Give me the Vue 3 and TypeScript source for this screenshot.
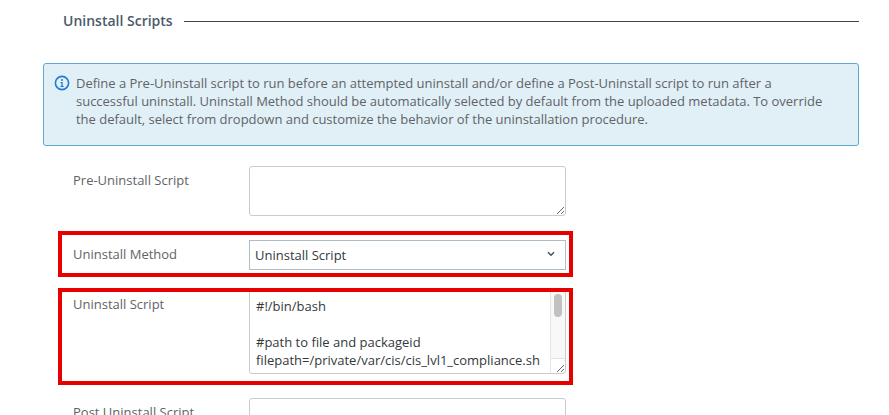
<script setup lang="ts">
const scriptText = `#!/bin/bash

#path to file and packageid
filepath=/private/var/cis/cis_lvl1_compliance.sh
`
</script>

<template>
  <main class="page">
    <header class="section-head">
      <h2>Uninstall Scripts</h2>
      <span class="rule"></span>
    </header>

    <div class="alert">
      <svg class="info" viewBox="0 0 16 16" width="16" height="16" aria-hidden="true">
        <circle cx="8" cy="8" r="6.6" fill="none" stroke="#1f7ad6" stroke-width="1.6" />
        <circle cx="8" cy="4.9" r="1" fill="#1f7ad6" />
        <path d="M6.5 7h2.2v4.1h1v1H6.4v-1h1V8h-.9z" fill="#1f7ad6" />
      </svg>
      <p>Define a Pre-Uninstall script to run before an attempted uninstall and/or define a Post-Uninstall script to run after a successful uninstall. Uninstall Method should be automatically selected by default from the uploaded metadata. To override the default, select from dropdown and customize the behavior of the uninstallation procedure.</p>
    </div>

    <form class="form">
      <div class="row row-pre">
        <label>Pre-Uninstall Script</label>
        <textarea class="area area-pre"></textarea>
      </div>
      <div class="row row-method">
        <label>Uninstall Method</label>
        <div class="select">
          <span>Uninstall Script</span>
          <svg viewBox="0 0 8 6" width="8" height="6" aria-hidden="true">
            <path d="M1 1.2 4 4.2 7 1.2" fill="none" stroke="#4a5560" stroke-width="1.6" />
          </svg>
        </div>
      </div>
      <div class="row row-script">
        <label>Uninstall Script</label>
        <div class="script-wrap">
          <textarea class="area area-script" :value="scriptText" spellcheck="false"></textarea>
          <span class="track"><span class="thumb"></span></span>
          <span class="corner"></span>
        </div>
      </div>
      <div class="row row-post">
        <label>Post Uninstall Script</label>
        <textarea class="area area-post"></textarea>
      </div>
      <span class="mark mark-method"></span>
      <span class="mark mark-script"></span>
    </form>
  </main>
</template>

<style>
html, body { margin: 0; background: #fff; overflow: hidden; }
</style>

<style scoped>
.page {
  width: 889px;
  height: 415px;
  overflow: hidden;
  box-sizing: border-box;
  padding: 12px 30px 0 43px;
  font-family: "Open Sans", sans-serif;
  font-size: 13px;
  line-height: 18px;
  color: #5f6368;
}
.section-head {
  display: flex;
  align-items: center;
  gap: 11px;
  height: 18px;
  padding-left: 20px;
}
.section-head h2 {
  margin: 0;
  font-size: 14px;
  font-weight: 600;
  line-height: 18px;
  color: #4c5a6b;
}
.rule {
  flex: 1;
  height: 1px;
  margin-top: 1px;
  background: #3f4650;
}
.alert {
  display: flex;
  gap: 6px;
  box-sizing: border-box;
  height: 83px;
  margin-top: 33px;
  padding: 10px 28px 0 10px;
  background: #e1f0f6;
  border: 1px solid #5aaad6;
  border-radius: 3px;
}
.info { flex: none; margin-top: 1px; }
.alert p { margin: 0; letter-spacing: -0.015px; }
.form {
  position: relative;
  margin-top: 20px;
  width: 523px;
}
.row {
  display: grid;
  grid-template-columns: 176px 317px;
  padding-left: 30px;
}
.row label { display: block; margin-top: 5px; }
.row-method { margin-top: 24px; }
.row-script { margin-top: 20px; }
.row-post { margin-top: 24px; }
.area {
  display: block;
  box-sizing: border-box;
  width: 317px;
  margin: 0;
  padding: 5px 6px;
  border: 1px solid #c9cccf;
  border-radius: 3px;
  background: #fff;
  font: inherit;
  color: #33383d;
  outline: none;
}
.area-pre { height: 50px; }
.script-wrap { position: relative; }
.area-script { height: 84px; padding-top: 6px; overflow: hidden; white-space: pre; }
.area-post { height: 50px; }
.track {
  position: absolute;
  top: 1px;
  right: 1px;
  width: 15px;
  height: 68px;
  box-sizing: border-box;
  background: #f8f8f8;
  border-left: 1px solid #e6e6e6;
  border-bottom: 1px solid #e2e2e2;
  pointer-events: none;
}
.thumb {
  position: absolute;
  top: 3px;
  left: 3px;
  width: 8px;
  height: 23px;
  border-radius: 4px;
  background: #c1c1c1;
}
.corner {
  position: absolute;
  top: 69px;
  right: 1px;
  width: 15px;
  height: 14px;
  box-sizing: border-box;
  border-left: 1px solid #e6e6e6;
  pointer-events: none;
}
.select {
  display: flex;
  align-items: center;
  justify-content: space-between;
  box-sizing: border-box;
  height: 30px;
  padding: 0 10px 0 5px;
  border: 1px solid #adbdc9;
  color: #33383d;
}
.select svg { margin-bottom: 2px; }
.mark {
  position: absolute;
  left: 15px;
  width: 515px;
  box-sizing: border-box;
  border: 4px solid #e60000;
  pointer-events: none;
}
.mark-method { top: 65px; height: 46px; }
.mark-script { top: 122px; height: 97px; }
</style>
